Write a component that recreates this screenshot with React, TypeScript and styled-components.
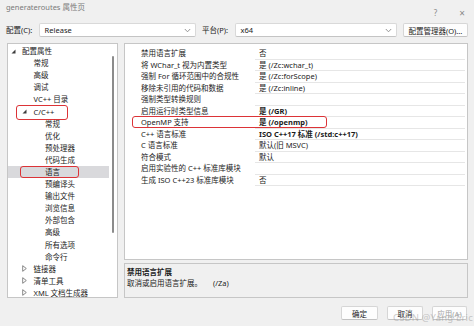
import styled, { createGlobalStyle } from "styled-components";

interface IMark {
  left: number;
  width: number;
  height: number;
  top?: number;
}

interface ITreeItem {
  label: string;
  level: number;
  expander?: "open" | "closed";
  selected?: boolean;
  mark?: IMark;
}

interface IProp {
  name: string;
  value: string;
  bold?: boolean;
  mark?: IMark;
}

const treeItems: ITreeItem[] = [
  { label: "配置属性", level: 0, expander: "open" },
  { label: "常规", level: 1 },
  { label: "高级", level: 1 },
  { label: "调试", level: 1 },
  { label: "VC++ 目录", level: 1 },
  { label: "C/C++", level: 1, expander: "open", mark: { left: 8, width: 52, height: 15 } },
  { label: "常规", level: 2 },
  { label: "优化", level: 2 },
  { label: "预处理器", level: 2 },
  { label: "代码生成", level: 2 },
  { label: "语言", level: 2, selected: true, mark: { left: 12, width: 59, height: 12 } },
  { label: "预编译头", level: 2 },
  { label: "输出文件", level: 2 },
  { label: "浏览信息", level: 2 },
  { label: "外部包含", level: 2 },
  { label: "高级", level: 2 },
  { label: "所有选项", level: 2 },
  { label: "命令行", level: 2 },
  { label: "链接器", level: 1, expander: "closed" },
  { label: "清单工具", level: 1, expander: "closed" },
  { label: "XML 文档生成器", level: 1, expander: "closed" },
];

const props: IProp[] = [
  { name: "禁用语言扩展", value: "否" },
  { name: "将 WChar_t 视为内置类型", value: "是 (/Zc:wchar_t)" },
  { name: "强制 For 循环范围中的合规性", value: "是 (/Zc:forScope)" },
  { name: "移除未引用的代码和数据", value: "是 (/Zc:inline)" },
  { name: "强制类型转换规则", value: "" },
  { name: "启用运行时类型信息", value: "是 (/GR)", bold: true },
  {
    name: "OpenMP 支持",
    value: "是 (/openmp)",
    bold: true,
    mark: { left: 7, width: 195, height: 12, top: -1 },
  },
  { name: "C++ 语言标准", value: "ISO C++17 标准 (/std:c++17)", bold: true },
  { name: "C 语言标准", value: "默认(旧 MSVC)" },
  { name: "符合模式", value: "默认" },
  { name: "启用实验性的 C++ 标准库模块", value: "" },
  { name: "生成 ISO C++23 标准库模块", value: "否" },
];

const Chevron = () => (
  <svg width="7" height="5" viewBox="0 0 7 5">
    <polyline points="0.8,1 3.5,3.8 6.2,1" fill="none" stroke="#8a8a8a" strokeWidth="0.9" />
  </svg>
);

const Expander = ({ kind }: { kind?: "open" | "closed" }) => (
  <ExpanderBox>
    {kind === "open" && (
      <svg width="5" height="5" viewBox="0 0 5 5">
        <polygon points="4.5,0.5 4.5,4.5 0.5,4.5" fill="#3c3c3c" />
      </svg>
    )}
    {kind === "closed" && (
      <svg width="5" height="7" viewBox="0 0 5 7">
        <polygon points="0.7,0.7 4.3,3.5 0.7,6.3" fill="none" stroke="#6a6a6a" strokeWidth="0.8" />
      </svg>
    )}
  </ExpanderBox>
);

const App = () => {
  return (
    <>
      <GlobalStyle />
      <Window>
        <TitleBar>
          <Title>generateroutes 属性页</Title>
          <Caption>
            <CaptionButton>?</CaptionButton>
            <CaptionButton $big>×</CaptionButton>
          </Caption>
        </TitleBar>

        <ConfigRow>
          <Label>配置(C):</Label>
          <Combo $width={159}>
            <span>Release</span>
            <Chevron />
          </Combo>
          <Label>平台(P):</Label>
          <Combo $width={164}>
            <span>x64</span>
            <Chevron />
          </Combo>
          <Button $width={66}>配置管理器(O)...</Button>
        </ConfigRow>

        <Main>
          <TreePanel>
            <TreeList>
              {treeItems.map((item, i) => (
                <TreeRow key={i} $level={item.level} $selected={item.selected}>
                  <Expander kind={item.expander} />
                  <TreeLabel>{item.label}</TreeLabel>
                  {item.mark && <Mark {...markProps(item.mark)} />}
                </TreeRow>
              ))}
            </TreeList>
            <ScrollTrack>
              <ScrollThumb />
            </ScrollTrack>
          </TreePanel>

          <RightColumn>
            <Grid>
              {props.map((p, i) => (
                <GridRow key={i}>
                  <NameCell>{p.name}</NameCell>
                  <ValueCell $bold={p.bold}>{p.value}</ValueCell>
                  {p.mark && <Mark {...markProps(p.mark)} />}
                </GridRow>
              ))}
            </Grid>
            <Description>
              <DescTitle>禁用语言扩展</DescTitle>
              <DescText>
                取消或启用语言扩展。<DescSwitch>(/Za)</DescSwitch>
              </DescText>
            </Description>
          </RightColumn>
        </Main>

        <Footer>
          <Button $width={37}>确定</Button>
          <Button $width={36}>取消</Button>
          <Button $width={35} $disabled>
            应用(A)
          </Button>
          <Watermark>CSDN @Yang Eric</Watermark>
        </Footer>
      </Window>
    </>
  );
};

const markProps = (m: IMark) => ({
  $left: m.left,
  $width: m.width,
  $height: m.height,
  $top: m.top ?? 0,
});

const GlobalStyle = createGlobalStyle`
  html, body {
    margin: 0;
    padding: 0;
    background: #f0f0f0;
  }
  body {
    font-family: "Noto Sans", "Noto Sans CJK SC", sans-serif;
    font-size: 7.5px;
    color: #1b1b1b;
  }
`;

const Window = styled.div`
  width: 474px;
  height: 326px;
  box-sizing: border-box;
  padding: 0 6px;
  display: flex;
  flex-direction: column;
  background: #f0f0f0;
  overflow: hidden;
`;

const TitleBar = styled.div`
  height: 16px;
  display: flex;
  align-items: flex-start;
  justify-content: space-between;
`;

const Title = styled.div`
  padding-top: 2px;
  line-height: 10px;
  color: #7a7a7a;
`;

const Caption = styled.div`
  display: flex;
  gap: 22px;
  margin-top: 8px;
  margin-right: 3px;
`;

const CaptionButton = styled.div<{ $big?: boolean }>`
  line-height: 10px;
  color: #8a8a8a;
  font-size: ${(p) => (p.$big ? "10px" : "8px")};
`;

const ConfigRow = styled.div`
  margin-top: 7px;
  height: 14px;
  display: flex;
  align-items: center;
`;

const Label = styled.div`
  width: 33px;
  line-height: 14px;
`;

const Combo = styled.div<{ $width: number }>`
  width: ${(p) => p.$width}px;
  height: 14px;
  box-sizing: border-box;
  margin-right: 6px;
  padding: 0 4px 0 5px;
  display: flex;
  align-items: center;
  justify-content: space-between;
  background: #ffffff;
  border: 1px solid #d9d9d9;
  border-bottom-color: #c4c4c4;
  border-radius: 2px;
`;

const Button = styled.div<{ $width: number; $disabled?: boolean }>`
  width: ${(p) => p.$width}px;
  height: 14px;
  box-sizing: border-box;
  display: flex;
  align-items: center;
  justify-content: center;
  background: #fdfdfd;
  border: 1px solid #d6d6d6;
  border-bottom-color: #c2c2c2;
  border-radius: 2px;
  color: ${(p) => (p.$disabled ? "#a0a0a0" : "#1b1b1b")};
`;

const Main = styled.div`
  margin-top: 6px;
  height: 255px;
  display: flex;
  gap: 6px;
  padding-left: 1px;
`;

const TreePanel = styled.div`
  width: 111px;
  box-sizing: border-box;
  display: flex;
  background: #ffffff;
  border: 1px solid #c6c6c6;
  overflow: hidden;
`;

const TreeList = styled.div`
  flex: 1;
  padding-top: 1px;
`;

const TreeRow = styled.div<{ $level: number; $selected?: boolean }>`
  position: relative;
  height: 12.1px;
  display: flex;
  align-items: center;
  padding-left: ${(p) => p.$level * 11.5}px;
  background: ${(p) => (p.$selected ? "#d9d9dc" : "transparent")};
  white-space: nowrap;
`;

const ExpanderBox = styled.div`
  width: 10px;
  height: 12px;
  display: flex;
  align-items: center;
  justify-content: center;
  flex-shrink: 0;
`;

const TreeLabel = styled.span`
  margin-left: 4px;
  line-height: 12px;
`;

const ScrollTrack = styled.div`
  width: 8px;
  padding-top: 12px;
  display: flex;
  justify-content: center;
`;

const ScrollThumb = styled.div`
  width: 2px;
  height: 177px;
  border-radius: 1px;
  background: #8c8c8c;
`;

const Mark = styled.div<{ $left: number; $width: number; $height: number; $top: number }>`
  position: absolute;
  left: ${(p) => p.$left}px;
  top: ${(p) => p.$top}px;
  width: ${(p) => p.$width}px;
  height: ${(p) => p.$height}px;
  box-sizing: border-box;
  border: 1.5px solid #dc3337;
  border-radius: 3px;
  pointer-events: none;
`;

const RightColumn = styled.div`
  width: 344px;
  display: flex;
  flex-direction: column;
  gap: 3px;
`;

const Grid = styled.div`
  height: 217px;
  box-sizing: border-box;
  padding-top: 4px;
  padding-right: 2px;
  background: #ffffff;
  border: 1px solid #c6c6c6;
`;

const GridRow = styled.div`
  position: relative;
  height: 11.5px;
  display: flex;
  white-space: nowrap;
`;

const NameCell = styled.div`
  width: 130px;
  box-sizing: border-box;
  padding-left: 16px;
  line-height: 11.5px;
`;

const ValueCell = styled.div<{ $bold?: boolean }>`
  flex: 1;
  padding-left: 4px;
  line-height: 11px;
  border-bottom: 0.5px solid #e6e6e6;
  font-weight: ${(p) => (p.$bold ? 700 : 400)};
`;

const Description = styled.div`
  flex: 1;
  box-sizing: border-box;
  padding: 3px 2px;
  background: #f0f0f0;
  border: 1px solid #c6c6c6;
`;

const DescTitle = styled.div`
  font-weight: 700;
  line-height: 11px;
`;

const DescText = styled.div`
  line-height: 11px;
`;

const DescSwitch = styled.span`
  margin-left: 11px;
`;

const Footer = styled.div`
  position: relative;
  margin-top: 8px;
  display: flex;
  justify-content: flex-end;
  gap: 9px;
  padding-right: 1px;
`;

// watermark from the source screenshot, lies over the buttons
const Watermark = styled.div`
  position: absolute;
  right: -5px;
  top: 7px;
  font-family: "Noto Sans", sans-serif;
  font-size: 9.5px;
  line-height: 10px;
  color: rgba(150, 150, 150, 0.5);
  letter-spacing: 0.2px;
  pointer-events: none;
`;

export default App;
